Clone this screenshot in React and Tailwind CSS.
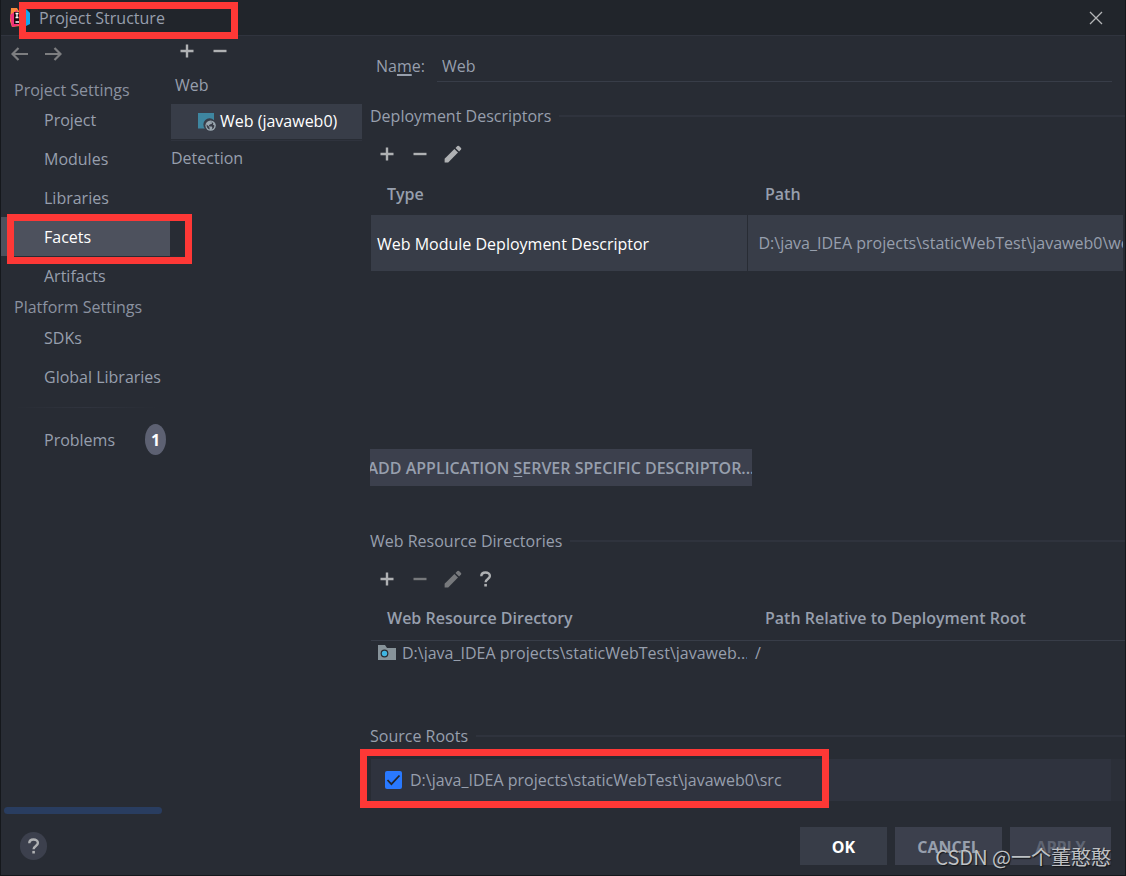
import React from 'react';

const PlusIcon = () => (
  <svg className="w-4 h-4" viewBox="0 0 16 16" fill="none" stroke="#afb1b3" strokeWidth="2.4">
    <path d="M8 1.5v13M1.5 8h13" />
  </svg>
);

const MinusIcon = ({ dim }) => (
  <svg className="w-4 h-4" viewBox="0 0 16 16" fill="none" stroke={dim ? '#77797c' : '#afb1b3'} strokeWidth="2.4">
    <path d="M1.5 8h13" />
  </svg>
);

const PencilIcon = ({ dim }) => (
  <svg className="w-[18px] h-[18px]" viewBox="0 0 18 18" fill={dim ? '#77797c' : '#afb1b3'}>
    <path d="M.6 17.4v-3.6L10.4 4l3.6 3.6-9.8 9.8z" />
    <path d="M11.5 2.9 13.4 1q.8-.7 1.6 0L17 3q.7.8 0 1.6l-1.9 1.9z" />
  </svg>
);

const QuestionIcon = () => (
  <svg className="w-4 h-4" viewBox="0 0 16 16" fill="none" stroke="#afb1b3" strokeWidth="2.4">
    <path d="M3.3 5.3C3.3 2.8 5.1 1.5 7.500 1.500s4.400 1.400 4.400 3.600C11.900 8 7.600 8 7.600 11.200" />
    <path d="M7.600 12.900v2.600" strokeWidth="2.6" />
  </svg>
);

const ArrowIcon = ({ flip }) => (
  <svg className={flip ? 'w-[18px] h-4 rotate-180' : 'w-[18px] h-4'} viewBox="0 0 18 16" fill="none" stroke="#7d7e80" strokeWidth="2.2">
    <path d="M17 8H2M7.5 2 1.5 8l6 6" />
  </svg>
);

const IdeaLogo = () => (
  <svg className="w-5 h-5 shrink-0" viewBox="0 0 20 20">
    <path d="M1 0h6l5 8-2 10-8 1-2-6z" fill="#fc8a3c" />
    <path d="M0 7l7-5 3 15-8 2-1-6z" fill="#f0307a" />
    <path d="M10 1l6 0 4 4v11l-6 3-4-5z" fill="#12a7ee" />
    <path d="M4 4h12v12H4z" fill="#1d0b12" />
    <path d="M5.5 5.5h3M7 5.5v4M5.5 9.5h3M5.5 14h5" stroke="#fff" strokeWidth="1.3" />
  </svg>
);

const WebFacetIcon = () => (
  <svg className="w-[18px] h-[18px] shrink-0" viewBox="0 0 18 18">
    <path d="M0 0h16v7.2A6 6 0 0 0 7 15.6H0z" fill="#3e86a0" />
    <circle cx="12.6" cy="12.6" r="5.2" fill="#9aa7b0" />
    <path d="M8.600 11.600l2.600 2.200.6 2.800c-2-.4-3.600-2.400-3.200-5zM11.800 9l2.600.2-.6 1.500-2 .9-1 .9.8 1h2.200l.6 1.500-.8 1.400c2-.6 3-2.300 2.700-4.200l-1.300-.4.300-1.600-1.500-1.400z" fill="#383d48" />
  </svg>
);

const FolderIcon = () => (
  <svg className="w-[18px] h-[15px] shrink-0" viewBox="0 0 18 15">
    <path d="M0 0h7l2 3h9v12H0z" fill="#87939a" />
    <circle cx="6.500" cy="8.500" r="3.900" fill="#282c34" />
    <circle cx="6.500" cy="8.500" r="2.700" fill="#3fb6e3" />
  </svg>
);

const NavItem = ({ label, selected, badge, children }) => (
  <li className="relative">
    <button
      type="button"
      className={`flex w-full h-[39px] items-center pl-[43px] text-left ${selected ? 'bg-[#4d515d] text-white' : ''}`}
    >
      <span className="whitespace-nowrap">{label}</span>
      {badge && (
        <span className="ml-auto mr-1 flex h-[31px] w-[21px] items-center justify-center rounded-[50%] bg-[#5d6172] font-bold text-white">
          {badge}
        </span>
      )}
    </button>
    {children}
  </li>
);

const GroupTitle = ({ children }) => (
  <div className="flex h-6 items-center gap-2">
    <h2 className="whitespace-nowrap">{children}</h2>
    <div className="h-0.5 flex-1 bg-[#2f333d]" />
  </div>
);

const ToolButton = ({ label, children }) => (
  <button type="button" aria-label={label} className="flex h-6 w-[33px] items-center justify-center">
    {children}
  </button>
);

const projectItems = ['Project', 'Modules', 'Libraries', 'Facets', 'Artifacts'];
const platformItems = ['SDKs', 'Global Libraries'];

const Sidebar = () => (
  <nav className="flex w-[169px] shrink-0 flex-col">
    <div className="flex h-9 items-center gap-[15px] pl-2.5">
      <button type="button" aria-label="Back"><ArrowIcon /></button>
      <button type="button" aria-label="Forward"><ArrowIcon flip /></button>
    </div>
    <h3 className="mt-1.5 h-[22px] pl-[13px] leading-6 text-[#8b92a0]">Project Settings</h3>
    <ul>
      {projectItems.map((item) => (
        <NavItem key={item} label={item} selected={item === 'Facets'}>
          {item === 'Facets' && (
            <div className="pointer-events-none absolute -top-[3px] left-1.5 h-[50px] w-[185px] border-[7px] border-[#fe3836]" />
          )}
        </NavItem>
      ))}
    </ul>
    <h3 className="h-[23px] pl-[13px] leading-6 text-[#8b92a0]">Platform Settings</h3>
    <ul>
      {platformItems.map((item) => (
        <NavItem key={item} label={item} />
      ))}
    </ul>
    <div className="mx-3 mt-[11px] mb-3 h-px bg-gradient-to-r from-transparent via-[#30343e] to-transparent" />
    <ul>
      <NavItem label="Problems" badge="1" />
    </ul>
    <div className="mt-auto ml-[3px] h-[7px] w-[158px] rounded-full bg-[#293d60]" />
  </nav>
);

const FacetList = () => (
  <section className="w-[200px] shrink-0 pt-[3px]">
    <div className="flex">
      <ToolButton label="Add facet"><PlusIcon /></ToolButton>
      <ToolButton label="Remove facet"><MinusIcon /></ToolButton>
    </div>
    <div className="mt-2.5 pl-[5px] leading-6">Web</div>
    <button type="button" className="mt-[7px] ml-px flex h-[35px] w-[191px] items-center gap-1 bg-[#383d48] pl-[27px] text-white">
      <WebFacetIcon />
      <span className="pb-0.5">Web (javaweb0)</span>
    </button>
    <div className="ml-px w-[191px] border-t border-[#2f333d] mt-px pt-[5px] leading-6">Detection</div>
  </section>
);

const DescriptorTable = () => (
  <table className="ml-px w-[calc(100%-3px)] table-fixed text-left">
    <thead>
      <tr className="h-[43px] font-semibold">
        <th className="w-[376px] pl-4 font-semibold">Type</th>
        <th className="pl-[18px] font-semibold">Path</th>
      </tr>
    </thead>
    <tbody>
      <tr className="h-14 bg-[#383d48]">
        <td className="border-r border-[#282c34] pt-0.5 pl-1.5 text-white">Web Module Deployment Descriptor</td>
        <td className="overflow-hidden pl-[11px] whitespace-nowrap">D:\java_IDEA projects\staticWebTest\javaweb0\web</td>
      </tr>
    </tbody>
  </table>
);

const ResourceTable = () => (
  <table className="ml-px w-full table-fixed text-left">
    <thead>
      <tr className="h-[43px] border-b border-[#383d48]">
        <th className="w-[376px] pl-4 font-semibold">Web Resource Directory</th>
        <th className="pl-[18px] font-semibold">Path Relative to Deployment Root</th>
      </tr>
    </thead>
    <tbody>
      <tr className="h-6">
        <td className="pl-[7px]">
          <div className="flex h-[18px] items-center gap-1.5 overflow-hidden whitespace-nowrap">
            <FolderIcon />
            D:\java_IDEA projects\staticWebTest\javaweb...
          </div>
        </td>
        <td className="pl-2">/</td>
      </tr>
    </tbody>
  </table>
);

const FacetEditor = () => (
  <main className="min-w-0 flex-1 pt-3.5">
    <div className="mr-[13px] flex h-8 items-center pl-1.5">
      <label htmlFor="facet-name" className="w-[61px]">
        Na<span className="underline decoration-2 underline-offset-2">m</span>e:
      </label>
      <input
        id="facet-name"
        defaultValue="Web"
        className="h-8 min-w-0 flex-1 border-b border-[#383d48] bg-transparent pl-[5px] outline-none"
      />
    </div>

    <div className="mt-[22px]">
      <GroupTitle>Deployment Descriptors</GroupTitle>
    </div>
    <div className="mt-3.5 mb-1.5 flex">
      <ToolButton label="Add descriptor"><PlusIcon /></ToolButton>
      <ToolButton label="Remove descriptor"><MinusIcon /></ToolButton>
      <ToolButton label="Edit descriptor"><PencilIcon /></ToolButton>
    </div>
    <div className="h-[277px]">
      <DescriptorTable />
    </div>
    <button type="button" className="flex h-[37px] w-[382px] items-center justify-center overflow-hidden bg-[#3c404d] font-semibold whitespace-nowrap">
      <span>ADD APPLICATION <span className="underline underline-offset-2">S</span>ERVER SPECIFIC DESCRIPTOR...</span>
    </button>

    <div className="mt-[43px]">
      <GroupTitle>Web Resource Directories</GroupTitle>
    </div>
    <div className="mt-3.5 mb-1.5 flex">
      <ToolButton label="Add directory"><PlusIcon /></ToolButton>
      <ToolButton label="Remove directory"><MinusIcon dim /></ToolButton>
      <ToolButton label="Edit directory"><PencilIcon dim /></ToolButton>
      <ToolButton label="Directory help"><QuestionIcon /></ToolButton>
    </div>
    <div className="h-[127px] overflow-hidden">
      <ResourceTable />
    </div>

    <GroupTitle>Source Roots</GroupTitle>
    <div className="relative mt-[11px] ml-px flex h-[42px] items-center border-r-[14px] border-[#2b2f38] bg-[#2f333e] pl-3.5">
      <label className="flex items-center gap-2 whitespace-nowrap">
        <span className="relative flex">
          <input type="checkbox" defaultChecked className="h-[18px] w-[17px] appearance-none rounded-xs bg-[#2979ff]" />
          <svg className="pointer-events-none absolute inset-0 h-full w-full" viewBox="0 0 17 18" fill="none" stroke="#21252b" strokeWidth="1.8">
            <path d="M2.500 9l3.900 4.200L14.500 4.500" />
          </svg>
        </span>
        D:\java_IDEA projects\staticWebTest\javaweb0\src
      </label>
      <div className="pointer-events-none absolute -top-[10px] -left-[11px] h-[59px] w-[469px] border-[7px] border-[#fe3836]" />
    </div>
  </main>
);

const Footer = () => (
  <footer className="relative flex h-[61px] items-center gap-2 pt-0.5 pr-3.5 pl-[19px]">
    <button type="button" aria-label="Help" className="mr-auto flex h-7 w-[27px] items-center justify-center rounded-full bg-[#3c404d]">
      <QuestionIcon />
    </button>
    <button type="button" className="h-[38px] w-[87px] bg-[#383d48] pt-0.5 font-bold text-white">OK</button>
    <button type="button" className="h-[38px] w-[107px] bg-[#3c404d] pt-0.5 font-bold">CANCEL</button>
    <button type="button" disabled className="h-[38px] w-[101px] bg-[#3c404d] pt-0.5 font-bold text-[#5f6573]">APPLY</button>
    <div className="pointer-events-none absolute right-3.5 bottom-1 font-['Noto_Sans_CJK_SC',sans-serif] text-xl leading-7 whitespace-nowrap text-[#bfc1c4] [text-shadow:1px_1px_1px_#15171b]">
      CSDN @一个董憨憨
    </div>
  </footer>
);

export default function App() {
  return (
    <div className="flex min-h-screen flex-col overflow-hidden border-r border-b border-l border-[#15181c] bg-[#282c34] font-['Open_Sans','Noto_Sans',sans-serif] text-base leading-6 text-[#979fad]">
      <header className="relative flex h-9 items-center border-b border-[#30343e] bg-[#21252b] pl-[9px]">
        <IdeaLogo />
        <h1 className="ml-[9px]">Project Structure</h1>
        <button type="button" aria-label="Close" className="ml-auto pr-[22px]">
          <svg className="h-3.5 w-3.5" viewBox="0 0 14 14" fill="none" stroke="#b4b6b8" strokeWidth="1.3">
            <path d="M1 1l12 12M13 1L1 13" />
          </svg>
        </button>
        <div className="pointer-events-none absolute top-0.5 left-[18px] z-10 h-[37px] w-[219px] border-[7px] border-[#fe3836]" />
      </header>
      <div className="flex flex-1">
        <Sidebar />
        <FacetList />
        <FacetEditor />
      </div>
      <Footer />
    </div>
  );
}
